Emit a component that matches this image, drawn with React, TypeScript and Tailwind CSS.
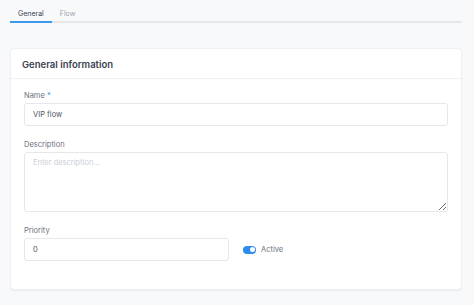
import React, { useState } from "react";

const App: React.FC = () => {
  const [tab, setTab] = useState("general");
  const [name, setName] = useState("VIP flow");
  const [priority, setPriority] = useState("0");
  const [active, setActive] = useState(true);

  return (
    <div className="min-h-[305px] bg-[#f8f9fb] font-['Inter',sans-serif] text-[#374151]">
      <div className="w-[462px] pl-[10px]">
        {/* tabs */}
        <div className="flex h-[23px] items-end border-b-2 border-[#e5e7eb] pt-[4px]">
          <button
            onClick={() => setTab("general")}
            className={`-mb-[2px] h-[19px] border-b-2 px-[8px] pt-[3px] text-[7px] ${tab === "general" ? "border-[#3b9be8] text-[#374151]" : "border-transparent text-[#9ca3af]"}`}
          >
            General
          </button>
          <button
            onClick={() => setTab("flow")}
            className={`-mb-[2px] h-[19px] border-b-2 px-[8px] pt-[3px] text-[7px] ${tab === "flow" ? "border-[#3b9be8] text-[#374151]" : "border-transparent text-[#9ca3af]"}`}
          >
            Flow
          </button>
        </div>

        {/* card */}
        <div className="mt-[25px] rounded-[4px] border border-[#eef0f3] bg-white shadow-[0_1px_2px_rgba(0,0,0,0.06)]">
          <div className="flex h-[30px] items-center border-b border-[#eef0f3] px-[11px]">
            <h2 className="pt-[3px] text-[9.5px] font-semibold text-[#3b4250]">General information</h2>
          </div>

          <div className="px-[13px] pb-[28px] pt-[12px]">
            <div className="mb-[14px]">
              <label className="mb-[2px] block text-[7.5px] leading-[10px] text-[#6b7280]">
                Name <span className="text-[#3b9be8]">*</span>
              </label>
              <input
                value={name}
                onChange={(e) => setName(e.target.value)}
                className="block h-[23px] w-full rounded-[3px] border border-[#e5e7eb] px-[8px] text-[7.5px] text-[#4b5563] outline-none"
              />
            </div>

            <div className="mb-[14px]">
              <label className="mb-[2px] block text-[7.5px] leading-[10px] text-[#6b7280]">Description</label>
              <textarea
                placeholder="Enter description..."
                className="block h-[60px] w-full rounded-[3px] border border-[#e5e7eb] px-[8px] py-[4px] text-[7.5px] text-[#4b5563] outline-none placeholder:text-[#c9ced6]"
              />
            </div>

            <div>
              <label className="mb-[2px] block text-[7.5px] leading-[10px] text-[#6b7280]">Priority</label>
              <div className="flex items-center">
                <input
                  value={priority}
                  onChange={(e) => setPriority(e.target.value)}
                  className="block h-[23px] w-[205px] rounded-[3px] border border-[#e5e7eb] px-[8px] text-[7.5px] text-[#4b5563] outline-none"
                />
                <button onClick={() => setActive(!active)} className="ml-[14px] flex items-center gap-[5px]">
                  <span className={`flex h-[8px] w-[13px] items-center rounded-full px-[1.5px] ${active ? "justify-end bg-[#2d8cf0]" : "justify-start bg-[#d1d5db]"}`}>
                    <span className="h-[5px] w-[5px] rounded-full bg-white" />
                  </span>
                  <span className="text-[7.5px] text-[#6b7280]">Active</span>
                </button>
              </div>
            </div>
          </div>
        </div>
      </div>
    </div>
  );
};

export default App;
